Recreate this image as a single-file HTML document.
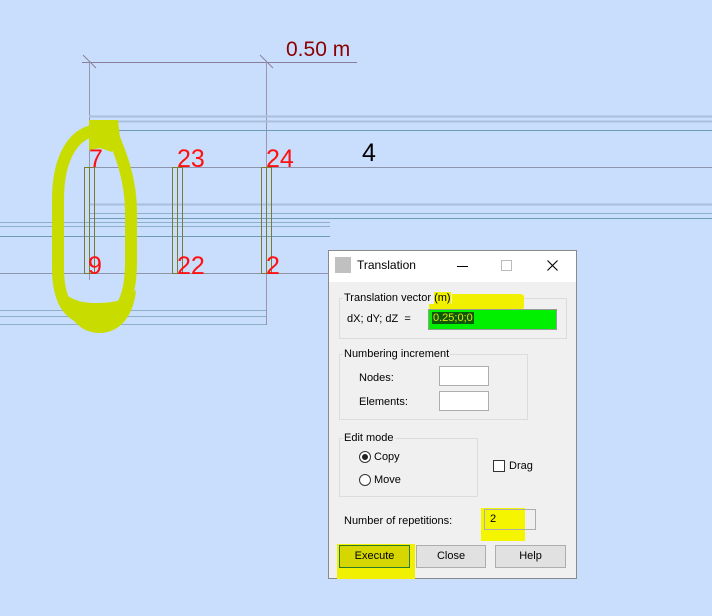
<!DOCTYPE html>
<html><head><style>
body{margin:0;width:712px;height:616px;overflow:hidden;background:#c9ddfc;font-family:"Liberation Sans",sans-serif;position:relative}
svg{position:absolute;left:0;top:0}
.dlg{position:absolute;left:328px;top:250px;width:247px;height:327px;background:#f0f0f0;border:1px solid #8a8a8a;font-size:11px;color:#000}
.tb{position:absolute;left:0;top:0;width:247px;height:31px;background:#fff}
.abs{position:absolute}
.grp{position:absolute;border:1px solid #dcdcdc}
.inp{position:absolute;background:#fff;border:1px solid #adadad}
.btn{position:absolute;background:#e1e1e1;border:1px solid #adadad;text-align:center;line-height:21px;height:21px}
.lbl{position:absolute;background:#f0f0f0;padding:0 1px}
</style></head><body>
<svg width="712" height="616">
<g stroke-width="1" fill="none">
<line x1="82" y1="62.5" x2="357" y2="62.5" stroke="#8a7f99"/>
<line x1="83" y1="55" x2="96" y2="68" stroke="#8a7f99"/>
<line x1="260" y1="55" x2="273" y2="68" stroke="#8a7f99"/>
<line x1="89.5" y1="62" x2="89.5" y2="280" stroke="#9a94ad"/>
<line x1="266.5" y1="62" x2="266.5" y2="325" stroke="#9a94ad"/>
<line x1="89" y1="116.5" x2="712" y2="116.5" stroke="#a8bfdd" stroke-width="2"/>
<line x1="89" y1="121.5" x2="712" y2="121.5" stroke="#a8bfdd" stroke-width="2"/>
<line x1="89" y1="130.5" x2="712" y2="130.5" stroke="#6e9cb8"/>
<line x1="89" y1="167.5" x2="712" y2="167.5" stroke="#8e94ad"/>
<line x1="89" y1="204.5" x2="712" y2="204.5" stroke="#a8bfdd" stroke-width="2"/>
<line x1="89" y1="213.5" x2="712" y2="213.5" stroke="#8cb0c8"/>
<line x1="89" y1="218.5" x2="712" y2="218.5" stroke="#6e9cb8"/>
<line x1="0" y1="222.5" x2="330" y2="222.5" stroke="#8cb0c8"/>
<line x1="0" y1="226.5" x2="330" y2="226.5" stroke="#8cb0c8"/>
<line x1="0" y1="236.5" x2="330" y2="236.5" stroke="#6e9cb8"/>
<line x1="0" y1="273.5" x2="330" y2="273.5" stroke="#8e94ad"/>
<line x1="0" y1="310.5" x2="266" y2="310.5" stroke="#8cb0c8"/>
<line x1="0" y1="316.5" x2="266" y2="316.5" stroke="#8cb0c8"/>
<line x1="0" y1="324.5" x2="266" y2="324.5" stroke="#8cb0c8"/>
<path d="M98 130 C75 132,58 155,58 200 L58 268 C58 305,72 320,96 320 C120 320,131 300,131 262 L131 212 C131 178,120 152,110 128 Z" stroke="#c9dc00" stroke-width="12" stroke-linejoin="round"/>
<path d="M62 290 C66 318,80 333,100 333 C120 333,134 315,136 290 C125 300,115 303,96 303 C78 303,68 298,62 290 Z" fill="#c9dc00"/>
<path d="M89 120 L118 120 L120 138 L112 152 L100 148 L89 150 Z" fill="#c9dc00"/>
<g stroke="#7a7a30">
<rect x="84.5" y="167.5" width="5" height="106"/><rect x="89.5" y="167.5" width="5" height="106"/>
<rect x="172.5" y="167.5" width="5" height="106"/><rect x="177.5" y="167.5" width="5" height="106"/>
<rect x="261.5" y="167.5" width="5" height="106"/><rect x="266.5" y="167.5" width="5" height="106"/>
</g>
</g>
<text x="286" y="56" font-size="21" fill="#8b0000" font-family="Liberation Sans">0.50 m</text>
<g font-size="25" fill="#ff1010" font-family="Liberation Sans">
<text x="89" y="167">7</text><text x="177" y="167">23</text><text x="266" y="167">24</text>
<text x="88" y="274">9</text><text x="177" y="274">22</text><text x="266" y="274">2</text>
</g>
<text x="362" y="161" font-size="25" fill="#000" font-family="Liberation Sans">4</text>
</svg>
<div class="dlg">
<div class="tb">
<div class="abs" style="left:6px;top:6px;width:16px;height:16px;background:#c0c0c0"></div>
<div class="abs" style="left:28px;top:7px;font-size:12px">Translation</div>
<div class="abs" style="left:128px;top:15px;width:11px;height:1px;background:#000"></div>
<div class="abs" style="left:172px;top:9px;width:9px;height:9px;border:1px solid #bbb"></div>
<svg class="abs" style="left:218px;top:9px" width="11" height="11"><path d="M0.5 0.5L10.5 10.5M10.5 0.5L0.5 10.5" stroke="#000" stroke-width="1.1"/></svg>
</div>
<div class="grp" style="left:10px;top:47px;width:226px;height:39px"></div>
<div class="abs" style="left:100px;top:43px;width:95px;height:16px;background:#f0f000;border-radius:3px"></div>
<div class="lbl" style="left:14px;top:41px">Translation vector <span style="background:#f0f000">(m)</span></div>
<div class="abs" style="left:18px;top:62px">dX; dY; dZ &nbsp;=</div>
<div class="abs" style="left:99px;top:58px;width:127px;height:19px;background:#00f000;border:1px solid #999"></div>
<div class="abs" style="left:103px;top:61px;background:#0a5a0a;color:#e6e600;padding:0 1px">0.25;0;0</div>
<div class="grp" style="left:10px;top:103px;width:187px;height:64px"></div>
<div class="lbl" style="left:14px;top:97px">Numbering increment</div>
<div class="abs" style="left:30px;top:121px">Nodes:</div>
<div class="inp" style="left:110px;top:115px;width:48px;height:18px"></div>
<div class="abs" style="left:30px;top:145px">Elements:</div>
<div class="inp" style="left:110px;top:140px;width:48px;height:18px"></div>
<div class="grp" style="left:10px;top:187px;width:137px;height:57px"></div>
<div class="lbl" style="left:14px;top:181px">Edit mode</div>
<div class="abs" style="left:30px;top:200px;width:10px;height:10px;border:1px solid #333;border-radius:50%;background:#fff"></div>
<div class="abs" style="left:33px;top:203px;width:6px;height:6px;border-radius:50%;background:#222"></div>
<div class="abs" style="left:45px;top:200px">Copy</div>
<div class="abs" style="left:30px;top:223px;width:10px;height:10px;border:1px solid #333;border-radius:50%;background:#fff"></div>
<div class="abs" style="left:45px;top:223px">Move</div>
<div class="abs" style="left:164px;top:209px;width:10px;height:10px;border:1px solid #333;background:#fff"></div>
<div class="abs" style="left:180px;top:209px">Drag</div>
<div class="abs" style="left:15px;top:264px">Number of repetitions:</div>
<div class="abs" style="left:152px;top:257px;width:44px;height:33px;background:#f5f500"></div>
<div class="inp" style="left:155px;top:258px;width:50px;height:19px;background:transparent"></div>
<div class="abs" style="left:161px;top:262px">2</div>
<div class="abs" style="left:8px;top:293px;width:78px;height:35px;background:#f0f000"></div>
<div class="btn" style="left:10px;top:294px;width:69px;border-color:#2a7a2a;background:#d6d600">Execute</div>
<div class="btn" style="left:87px;top:294px;width:68px">Close</div>
<div class="btn" style="left:166px;top:294px;width:69px">Help</div>
</div>
</body></html>
